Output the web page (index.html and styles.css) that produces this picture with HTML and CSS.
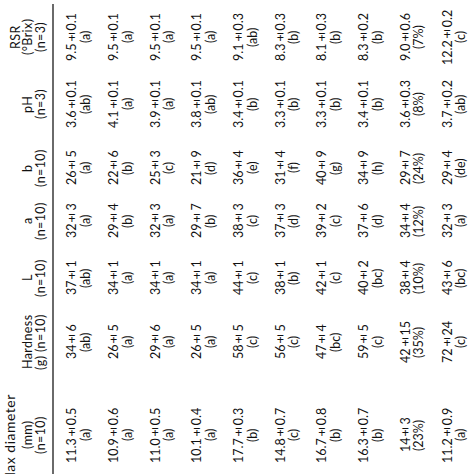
FILE: index.html
```html
<!DOCTYPE html>
<html lang="en">
<head>
<meta charset="utf-8">
<title>Table</title>
<link rel="stylesheet" href="styles.css">
</head>
<body>
<div class="page">
  <div class="sheet">
    <div class="grid">
      <div class="cell hd"><span class="gap">Max diameter</span><span>(mm)</span><span>(n=10)</span></div>
      <div class="cell hd"><span>Hardness</span><span>(g) (n=10)</span></div>
      <div class="cell hd"><span>L</span><span>(n=10)</span></div>
      <div class="cell hd"><span>a</span><span>(n=10)</span></div>
      <div class="cell hd"><span>b</span><span>(n=10)</span></div>
      <div class="cell hd"><span>pH</span><span>(n=3)</span></div>
      <div class="cell hd"><span>RSR</span><span>(°Brix)</span><span>(n=3)</span></div>

      <div class="cell"><span>11.3<i class="pm">±</i>0.5</span><span>(a)</span></div>
      <div class="cell"><span>34<i class="pm">±</i>6</span><span>(ab)</span></div>
      <div class="cell"><span>37<i class="pm">±</i>1</span><span>(ab)</span></div>
      <div class="cell"><span>32<i class="pm">±</i>3</span><span>(a)</span></div>
      <div class="cell"><span>26<i class="pm">±</i>5</span><span>(a)</span></div>
      <div class="cell"><span>3.6<i class="pm">±</i>0.1</span><span>(ab)</span></div>
      <div class="cell"><span>9.5<i class="pm">±</i>0.1</span><span>(a)</span></div>

      <div class="cell"><span>10.9<i class="pm">±</i>0.6</span><span>(a)</span></div>
      <div class="cell"><span>26<i class="pm">±</i>5</span><span>(a)</span></div>
      <div class="cell"><span>34<i class="pm">±</i>1</span><span>(a)</span></div>
      <div class="cell"><span>29<i class="pm">±</i>4</span><span>(b)</span></div>
      <div class="cell"><span>22<i class="pm">±</i>6</span><span>(b)</span></div>
      <div class="cell"><span>4.1<i class="pm">±</i>0.1</span><span>(a)</span></div>
      <div class="cell"><span>9.5<i class="pm">±</i>0.1</span><span>(a)</span></div>

      <div class="cell"><span>11.0<i class="pm">±</i>0.5</span><span>(a)</span></div>
      <div class="cell"><span>29<i class="pm">±</i>6</span><span>(a)</span></div>
      <div class="cell"><span>34<i class="pm">±</i>1</span><span>(a)</span></div>
      <div class="cell"><span>32<i class="pm">±</i>3</span><span>(a)</span></div>
      <div class="cell"><span>25<i class="pm">±</i>3</span><span>(c)</span></div>
      <div class="cell"><span>3.9<i class="pm">±</i>0.1</span><span>(a)</span></div>
      <div class="cell"><span>9.5<i class="pm">±</i>0.1</span><span>(a)</span></div>

      <div class="cell"><span>10.1<i class="pm">±</i>0.4</span><span>(a)</span></div>
      <div class="cell"><span>26<i class="pm">±</i>5</span><span>(a)</span></div>
      <div class="cell"><span>34<i class="pm">±</i>1</span><span>(a)</span></div>
      <div class="cell"><span>29<i class="pm">±</i>7</span><span>(b)</span></div>
      <div class="cell"><span>21<i class="pm">±</i>9</span><span>(d)</span></div>
      <div class="cell"><span>3.8<i class="pm">±</i>0.1</span><span>(ab)</span></div>
      <div class="cell"><span>9.5<i class="pm">±</i>0.1</span><span>(a)</span></div>

      <div class="cell"><span>17.7<i class="pm">±</i>0.3</span><span>(b)</span></div>
      <div class="cell"><span>58<i class="pm">±</i>5</span><span>(c)</span></div>
      <div class="cell"><span>44<i class="pm">±</i>1</span><span>(c)</span></div>
      <div class="cell"><span>38<i class="pm">±</i>3</span><span>(c)</span></div>
      <div class="cell"><span>36<i class="pm">±</i>4</span><span>(e)</span></div>
      <div class="cell"><span>3.4<i class="pm">±</i>0.1</span><span>(b)</span></div>
      <div class="cell"><span>9.1<i class="pm">±</i>0.3</span><span>(ab)</span></div>

      <div class="cell"><span>14.8<i class="pm">±</i>0.7</span><span>(c)</span></div>
      <div class="cell"><span>56<i class="pm">±</i>5</span><span>(c)</span></div>
      <div class="cell"><span>38<i class="pm">±</i>1</span><span>(b)</span></div>
      <div class="cell"><span>37<i class="pm">±</i>3</span><span>(d)</span></div>
      <div class="cell"><span>31<i class="pm">±</i>4</span><span>(f)</span></div>
      <div class="cell"><span>3.3<i class="pm">±</i>0.1</span><span>(b)</span></div>
      <div class="cell"><span>8.3<i class="pm">±</i>0.3</span><span>(b)</span></div>

      <div class="cell"><span>16.7<i class="pm">±</i>0.8</span><span>(b)</span></div>
      <div class="cell"><span>47<i class="pm">±</i>4</span><span>(bc)</span></div>
      <div class="cell"><span>42<i class="pm">±</i>1</span><span>(c)</span></div>
      <div class="cell"><span>39<i class="pm">±</i>2</span><span>(c)</span></div>
      <div class="cell"><span>40<i class="pm">±</i>9</span><span>(g)</span></div>
      <div class="cell"><span>3.3<i class="pm">±</i>0.1</span><span>(b)</span></div>
      <div class="cell"><span>8.1<i class="pm">±</i>0.3</span><span>(b)</span></div>

      <div class="cell"><span>16.3<i class="pm">±</i>0.7</span><span>(b)</span></div>
      <div class="cell"><span>59<i class="pm">±</i>5</span><span>(c)</span></div>
      <div class="cell"><span>40<i class="pm">±</i>2</span><span>(bc)</span></div>
      <div class="cell"><span>37<i class="pm">±</i>6</span><span>(d)</span></div>
      <div class="cell"><span>34<i class="pm">±</i>9</span><span>(h)</span></div>
      <div class="cell"><span>3.4<i class="pm">±</i>0.1</span><span>(b)</span></div>
      <div class="cell"><span>8.3<i class="pm">±</i>0.2</span><span>(b)</span></div>

      <div class="cell"><span>14<i class="pm">±</i>3</span><span>(23%)</span></div>
      <div class="cell"><span>42<i class="pm">±</i>15</span><span>(35%)</span></div>
      <div class="cell"><span>38<i class="pm">±</i>4</span><span>(10%)</span></div>
      <div class="cell"><span>34<i class="pm">±</i>4</span><span>(12%)</span></div>
      <div class="cell"><span>29<i class="pm">±</i>7</span><span>(24%)</span></div>
      <div class="cell"><span>3.6<i class="pm">±</i>0.3</span><span>(8%)</span></div>
      <div class="cell"><span>9.0<i class="pm">±</i>0.6</span><span>(7%)</span></div>

      <div class="cell"><span>11.2<i class="pm">±</i>0.9</span><span>(a)</span></div>
      <div class="cell"><span>72<i class="pm">±</i>24</span><span>(c)</span></div>
      <div class="cell"><span>43<i class="pm">±</i>6</span><span>(bc)</span></div>
      <div class="cell"><span>32<i class="pm">±</i>3</span><span>(a)</span></div>
      <div class="cell"><span>29<i class="pm">±</i>4</span><span>(de)</span></div>
      <div class="cell"><span>3.7<i class="pm">±</i>0.2</span><span>(ab)</span></div>
      <div class="cell"><span>12.2<i class="pm">±</i>0.2</span><span>(c)</span></div>
    </div>
  </div>
</div>
</body>
</html>
```

FILE: styles.css
```css
html, body {
  margin: 0;
  padding: 0;
  background: #ffffff;
}

.page {
  width: 474px;
  height: 474px;
  overflow: hidden;
}

.sheet {
  width: 474px;
  height: 474px;
  writing-mode: vertical-rl;
  transform: rotate(180deg);
  font-family: Lato, "Liberation Sans", sans-serif;
  font-size: 12.5px;
  line-height: 13.5px;
  color: #111111;
}

.grid {
  display: grid;
  grid-template-columns: 126px 60px 68px 46px 60px 68px 66px;
  grid-template-rows: 54px repeat(10, 41.7px);
  margin-top: -24px;
}

.cell {
  display: flex;
  flex-direction: column;
  justify-content: center;
  align-items: center;
  white-space: nowrap;
  box-sizing: border-box;
  padding-right: 8px;
}

.pm {
  font-style: normal;
  margin-inline: -1px;
}

.hd {
  justify-content: flex-end;
  font-size: 12.5px;
  letter-spacing: 0.4px;
  line-height: 12.8px;
  padding-left: 4px;
  padding-right: 0;
  border-left: 2px solid #6a6a6a;
}

.gap {
  font-size: 14px;
  letter-spacing: 0.5px;
  margin-block-end: 6px;
  margin-inline-start: -10px;
}
```
